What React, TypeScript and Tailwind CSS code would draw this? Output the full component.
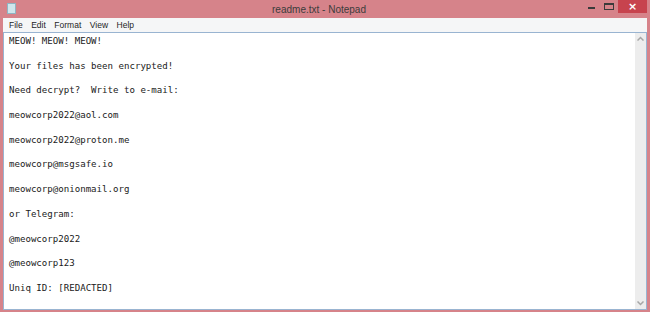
import React from 'react';

const lines = [
  'MEOW! MEOW! MEOW!',
  '',
  'Your files has been encrypted!',
  '',
  'Need decrypt?  Write to e-mail:',
  '',
  'meowcorp2022@aol.com',
  '',
  'meowcorp2022@proton.me',
  '',
  'meowcorp@msgsafe.io',
  '',
  'meowcorp@onionmail.org',
  '',
  'or Telegram:',
  '',
  '@meowcorp2022',
  '',
  '@meowcorp123',
  '',
  'Uniq ID: [REDACTED]',
];

const menu = ['File', 'Edit', 'Format', 'View', 'Help'];

export default function App() {
  return (
    <div className="w-[650px] h-[312px] bg-[#d6838a] flex flex-col overflow-hidden">
      {/* title bar */}
      <div className="h-[18px] flex items-start relative shrink-0">
        <div className="ml-[7px] mt-[3px] w-[9px] h-[11px] bg-[#cfe6ec] border border-[#8fb4c2]" />
        <div className="absolute inset-x-0 top-0 h-[18px] pr-[12px] flex items-center justify-center text-[10px] text-[#3c3c3c] font-['Liberation_Sans',sans-serif]">
          readme.txt - Notepad
        </div>
        <div className="ml-auto flex items-start relative">
          <div className="w-[18px] h-[13px] flex items-center justify-center">
            <div className="w-[7px] h-[2px] bg-[#3a3a3a] mt-[2px]" />
          </div>
          <div className="w-[18px] h-[13px] flex items-center justify-center">
            <div className="w-[10px] h-[7px] border border-[#3a3a3a] border-t-2" />
          </div>
          <div className="w-[29px] h-[13px] mr-[3px] bg-[#c7434e] flex items-center justify-center text-white text-[11px] leading-none font-['DejaVu_Sans',sans-serif] font-bold">
            ×
          </div>
        </div>
      </div>

      <div className="flex-1 flex flex-col px-[3px] pb-[2px] min-h-0">
        {/* menu bar */}
        <div className="h-[14px] bg-[#f5f6f7] flex items-center pl-[6px] gap-[8.5px] text-[8.5px] text-[#1e1e1e] font-['Liberation_Sans',sans-serif] shrink-0">
          {menu.map((m) => (
            <span key={m}>{m}</span>
          ))}
        </div>

        {/* edit area */}
        <div className="flex-1 flex border border-[#99b4d1] bg-white min-h-0">
          <div className="flex-1 pl-[5px] pt-[2px] font-['DejaVu_Sans_Mono',monospace] text-[9.1px] leading-[12.35px] text-[#1a1a1a] whitespace-pre">
            {lines.map((l, i) => (
              <div key={i} className="h-[12.35px]">{l}</div>
            ))}
          </div>
          <div className="w-[11px] bg-[#ededed] flex flex-col items-center justify-between py-[3px]">
            <svg width="7" height="5" viewBox="0 0 7 5">
              <path d="M0.5 4.5 L3.5 1.5 L6.5 4.5" stroke="#a6a6a6" strokeWidth="1.5" fill="none" />
            </svg>
            <svg width="7" height="5" viewBox="0 0 7 5">
              <path d="M0.5 0.5 L3.5 3.5 L6.5 0.5" stroke="#a6a6a6" strokeWidth="1.5" fill="none" />
            </svg>
          </div>
        </div>
      </div>
    </div>
  );
}
